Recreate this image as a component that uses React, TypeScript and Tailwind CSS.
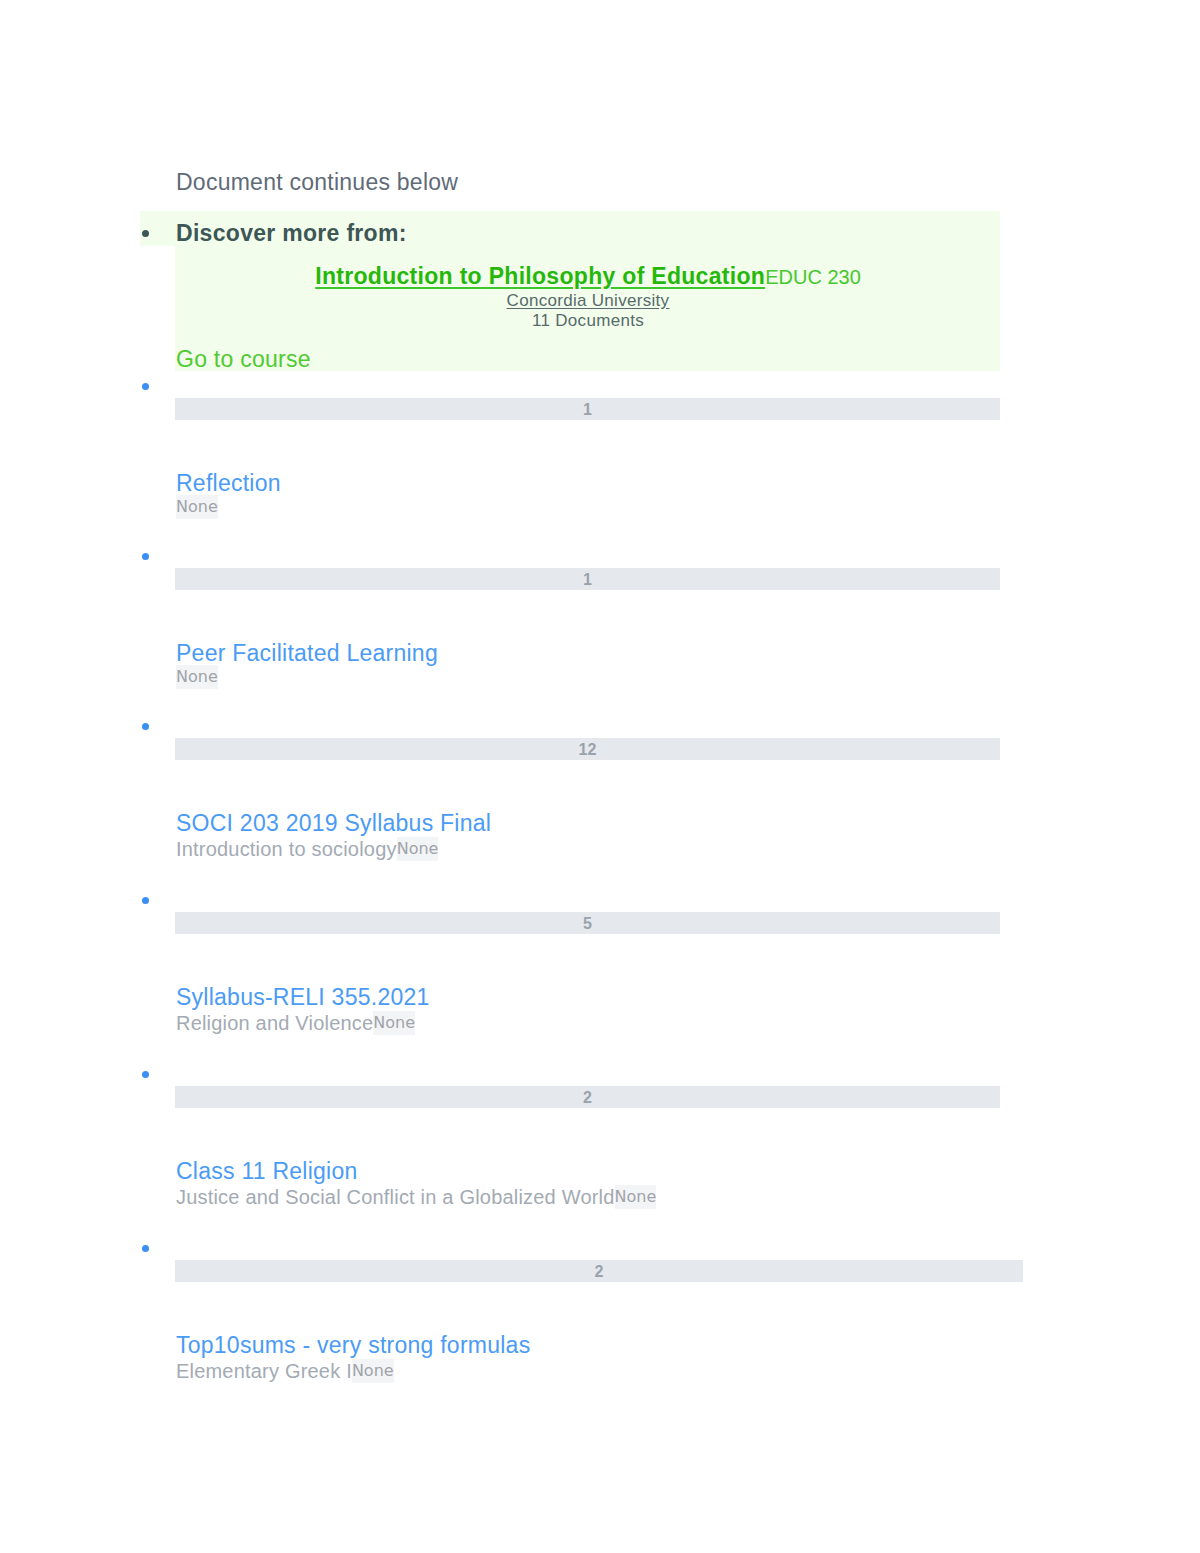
const docs = [
  { pages: "1", title: "Reflection", course: "" },
  { pages: "1", title: "Peer Facilitated Learning", course: "" },
  { pages: "12", title: "SOCI 203 2019 Syllabus Final", course: "Introduction to sociology" },
  { pages: "5", title: "Syllabus-RELI 355.2021", course: "Religion and Violence" },
  { pages: "2", title: "Class 11 Religion", course: "Justice and Social Conflict in a Globalized World" },
  { pages: "2", title: "Top10sums - very strong formulas", course: "Elementary Greek I", wide: true },
]

export default function App() {
  return (
    <div className="min-h-[1553px] bg-white font-['Liberation_Sans',Arial,sans-serif]">
      <div className="pt-[168px] pl-[176px] text-[23px] leading-[28px] tracking-[0.25px] text-[#5f6b78]">
        Document continues below
      </div>

      <ul className="mt-[15px] ml-[140px] w-[860px]">
        {/* Discover more from */}
        <li>
          <div className="flex h-[35px] items-center bg-[#f3fdeb] pt-[9px]">
            <div className="flex w-[36px] justify-start pl-[2px]">
              <span className="h-[7px] w-[7px] rounded-full bg-[#3d5757]" />
            </div>
            <span className="text-[23px] font-bold tracking-[0.3px] text-[#3d5757]">Discover more from:</span>
          </div>
          <div className="ml-[35px] h-[125px] bg-[#f3fdeb] pl-px">
            <div className="pt-[16px] text-center text-[23px] leading-[28px] tracking-[0.2px]">
              <a className="font-bold tracking-[0.3px] text-[#25b80b] underline decoration-[#3cc62c] underline-offset-[3px]">
                Introduction to Philosophy of Education
              </a>
              <span className="text-[20px] tracking-normal text-[#45c82e]">EDUC 230</span>
            </div>
            <div className="text-center text-[17px] leading-[20px] tracking-[0.3px] text-[#566b6b]">
              <span className="underline underline-offset-[2px]">Concordia University</span>
            </div>
            <div className="text-center text-[17px] leading-[20px] tracking-[0.3px] text-[#566b6b]">11 Documents</div>
            <div className="pt-[14px] text-[23px] leading-[28px] tracking-[0.25px] text-[#4fcb31]">Go to course</div>
          </div>
        </li>

        {docs.map((d, i) => (
          <li key={i} className="flex">
            <div className="flex h-[30px] w-[35px] shrink-0 items-center justify-start pl-[2px]">
              <span className="h-[7px] w-[7px] rounded-full bg-[#3b8ef3]" />
            </div>
            <div className="flex-1 pt-[27px] pb-[23px]">
              <div
                className={`flex h-[22px] items-center justify-center bg-[#e5e9ed] pt-[2px] text-[16px] font-bold text-[#9aa2ab] ${d.wide ? "-mr-[23px]" : ""}`}
              >
                {d.pages}
              </div>
              <div className="mt-[50px] pl-px text-[23px] leading-[26px] tracking-[0.25px] text-[#4a9bf5]">{d.title}</div>
              <div
                className={`flex items-center pl-px text-[20px] tracking-[0.2px] text-[#a3aab3] ${d.course ? "h-[26px]" : "h-[22px]"}`}
              >
                {d.course && <span>{d.course}</span>}
                <span className="bg-[#f3f4f6] font-['DejaVu_Sans',sans-serif] text-[16px] tracking-normal text-[#a0a4aa]">None</span>
              </div>
            </div>
          </li>
        ))}
      </ul>
    </div>
  )
}
